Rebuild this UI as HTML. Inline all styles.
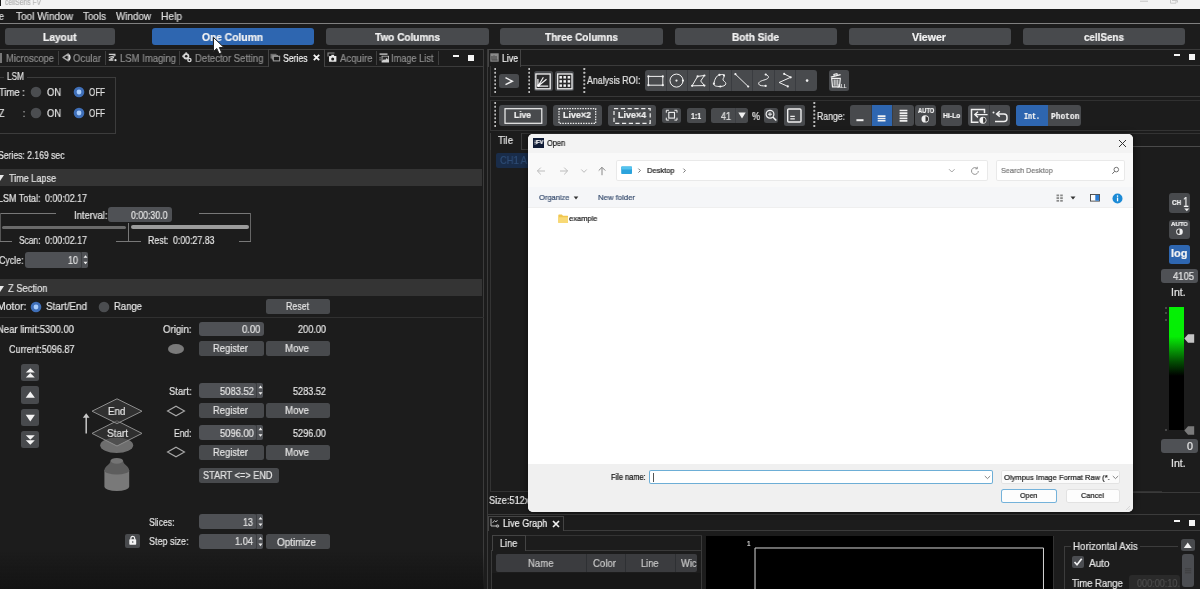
<!DOCTYPE html>
<html><head><meta charset="utf-8"><title>cellSens FV</title>
<style>
html,body{margin:0;padding:0;}
body{width:1200px;height:589px;overflow:hidden;position:relative;background:#1c1c1c;font-family:"Liberation Sans", sans-serif;}
#root{position:absolute;left:0;top:0;width:1200px;height:589px;overflow:hidden;filter:blur(0.5px);}
#root div,#root span,#root svg{position:absolute;display:block;}
#root span{white-space:pre;will-change:transform;-webkit-text-stroke:0.22px;}
</style></head><body><div id="root">
<div style="left:0px;top:0.0px;width:1200px;height:8.8px;background:#f3f3f3;"></div>
<div style="left:0px;top:0.0px;width:1.3px;height:6.0px;background:#1a1a1a;"></div>
<span style="top:-4.35px;font-size:8.5px;line-height:12.5px;color:#b4b4b4;left:4.8px;transform-origin:0 50%;transform:scaleX(0.794);">cellSens FV</span>
<svg style="left:1136px;top:0.0px" width="50" height="9" viewBox="0 0 50 9"><path d="M4 1.200h8" stroke="#c4c4c4" fill="none" stroke-width="1"/><path d="M34.500 0v3.200h5.500V0M36 0.500h5.500v2" stroke="#c4c4c4" fill="none" stroke-width="0.900"/></svg>
<div style="left:0px;top:8.8px;width:1200px;height:14.2px;background:#1a1a1a;"></div>
<span style="top:9.25px;font-size:10.5px;line-height:14.5px;color:#dcdcdc;left:-1.2px;transform-origin:0 50%;transform:scaleX(0.856);">e</span>
<span style="top:9.25px;font-size:10.5px;line-height:14.5px;color:#dcdcdc;left:15.8px;transform-origin:0 50%;transform:scaleX(0.957);">Tool Window</span>
<span style="top:9.25px;font-size:10.5px;line-height:14.5px;color:#dcdcdc;left:82.8px;transform-origin:0 50%;transform:scaleX(0.938);">Tools</span>
<span style="top:9.25px;font-size:10.5px;line-height:14.5px;color:#dcdcdc;left:115.8px;transform-origin:0 50%;transform:scaleX(0.937);">Window</span>
<span style="top:9.25px;font-size:10.5px;line-height:14.5px;color:#dcdcdc;left:160.8px;transform-origin:0 50%;transform:scaleX(0.972);">Help</span>
<div style="left:0px;top:23.0px;width:1200px;height:1.0px;background:#808080;"></div>
<div style="left:5px;top:28.0px;width:110px;height:16.5px;background:#484a4d;border-radius:3px;"></div>
<span style="top:29.55px;font-size:10.5px;line-height:14.5px;color:#f2f2f2;font-weight:700;left:43.3px;transform-origin:0 50%;transform:scaleX(0.973);">Layout</span>
<div style="left:152px;top:28.0px;width:162px;height:16.5px;background:#2e66b0;border-radius:3px;"></div>
<span style="top:29.55px;font-size:10.5px;line-height:14.5px;color:#f2f2f2;font-weight:700;left:201.8px;transform-origin:0 50%;transform:scaleX(0.977);">One Column</span>
<div style="left:326px;top:28.0px;width:162.5px;height:16.5px;background:#484a4d;border-radius:3px;"></div>
<span style="top:29.55px;font-size:10.5px;line-height:14.5px;color:#f2f2f2;font-weight:700;left:374.8px;transform-origin:0 50%;transform:scaleX(0.955);">Two Columns</span>
<div style="left:500px;top:28.0px;width:162.5px;height:16.5px;background:#484a4d;border-radius:3px;"></div>
<span style="top:29.55px;font-size:10.5px;line-height:14.5px;color:#f2f2f2;font-weight:700;left:544.8px;transform-origin:0 50%;transform:scaleX(0.955);">Three Columns</span>
<div style="left:675px;top:28.0px;width:161.5px;height:16.5px;background:#484a4d;border-radius:3px;"></div>
<span style="top:29.55px;font-size:10.5px;line-height:14.5px;color:#f2f2f2;font-weight:700;left:731.8px;transform-origin:0 50%;transform:scaleX(0.959);">Both Side</span>
<div style="left:849px;top:28.0px;width:162px;height:16.5px;background:#484a4d;border-radius:3px;"></div>
<span style="top:29.55px;font-size:10.5px;line-height:14.5px;color:#f2f2f2;font-weight:700;left:911.8px;transform-origin:0 50%;transform:scaleX(1.01);">Viewer</span>
<div style="left:1023px;top:28.0px;width:162px;height:16.5px;background:#484a4d;border-radius:3px;"></div>
<span style="top:29.55px;font-size:10.5px;line-height:14.5px;color:#f2f2f2;font-weight:700;left:1083.8px;transform-origin:0 50%;transform:scaleX(0.938);">cellSens</span>
<div style="left:0px;top:48.5px;width:484px;height:1.0px;background:#3b3b3b;"></div>
<div style="left:0px;top:66.0px;width:484px;height:1.0px;background:#3b3b3b;"></div>
<div style="left:483.2px;top:48.5px;width:1.3px;height:540.5px;background:#3b3b3b;"></div>
<div style="left:57.5px;top:51.0px;width:1.0px;height:14.0px;background:#3e3e3e;"></div>
<div style="left:104.5px;top:51.0px;width:1.0px;height:14.0px;background:#3e3e3e;"></div>
<div style="left:178.5px;top:51.0px;width:1.0px;height:14.0px;background:#3e3e3e;"></div>
<div style="left:376px;top:51.0px;width:1px;height:14.0px;background:#3e3e3e;"></div>
<div style="left:437.5px;top:51.0px;width:1.0px;height:14.0px;background:#3e3e3e;"></div>
<div style="left:267.5px;top:49.0px;width:57.0px;height:18.0px;background:#1c1c1c;border:1px solid #444;border-bottom:none;box-sizing:border-box;"></div>
<span style="top:50.75px;font-size:10.5px;line-height:14.5px;color:#8c8c8c;left:5.8px;transform-origin:0 50%;transform:scaleX(0.894);">Microscope</span>
<span style="top:50.75px;font-size:10.5px;line-height:14.5px;color:#8c8c8c;left:73.3px;transform-origin:0 50%;transform:scaleX(0.905);">Ocular</span>
<span style="top:50.75px;font-size:10.5px;line-height:14.5px;color:#8c8c8c;left:119.8px;transform-origin:0 50%;transform:scaleX(0.905);">LSM Imaging</span>
<span style="top:50.75px;font-size:10.5px;line-height:14.5px;color:#8c8c8c;left:194.8px;transform-origin:0 50%;transform:scaleX(0.91);">Detector Setting</span>
<span style="top:50.75px;font-size:10.5px;line-height:14.5px;color:#f0f0f0;left:282.8px;transform-origin:0 50%;transform:scaleX(0.823);">Series</span>
<span style="top:50.75px;font-size:10.5px;line-height:14.5px;color:#8c8c8c;left:339.8px;transform-origin:0 50%;transform:scaleX(0.913);">Acquire</span>
<span style="top:50.75px;font-size:10.5px;line-height:14.5px;color:#8c8c8c;left:391.3px;transform-origin:0 50%;transform:scaleX(0.877);">Image List</span>
<svg style="left:61.5px;top:53.0px" width="9.5" height="9" viewBox="0 0 9.5 9"><path d="M1 4.400L6.300 0.900V7.900z" fill="none" stroke="#a8a8a8" stroke-width="1.300" stroke-linejoin="round"/><path d="M6.900 1.600Q8.900 4.400 6.900 7.200" fill="none" stroke="#e0e0e0" stroke-width="1.500"/></svg>
<svg style="left:108px;top:52.8px" width="9.5" height="9" viewBox="0 0 9.5 9"><path d="M0.800 1.300h6.700M0.800 4.500l6.700-2M0.800 7h4.600M2.500 5.800l3.500-1.500" stroke="#cfcfcf" stroke-width="1.300" fill="none"/><circle cx="7.500" cy="7.200" r="1.100" fill="#e0e0e0"/></svg>
<svg style="left:182px;top:52.0px" width="10.5" height="10.5" viewBox="0 0 10.5 10.5"><circle cx="4.200" cy="4.300" r="3.100" fill="#d8d8d8"/><rect x="3.300" y="0.400" width="1.800" height="1.500" fill="#d8d8d8"/><rect x="0.300" y="3.400" width="1.500" height="1.800" fill="#d8d8d8"/><circle cx="4.200" cy="4.300" r="1.300" fill="#1c1c1c"/><circle cx="7.400" cy="8" r="2.300" fill="#d8d8d8"/><circle cx="7.400" cy="8" r="0.900" fill="#1c1c1c"/></svg>
<svg style="left:270px;top:52.5px" width="10.5" height="9" viewBox="0 0 10.5 9"><rect x="0.500" y="0.800" width="6" height="4.700" fill="#6e6e6e"/><rect x="1.800" y="2" width="6.200" height="4.600" fill="#848484"/><rect x="3.300" y="3.300" width="6.300" height="4.600" fill="#1c1c1c" stroke="#9c9c9c" stroke-width="1.100"/></svg>
<svg style="left:327px;top:52.0px" width="10.5" height="10.5" viewBox="0 0 10.5 10.5"><path d="M1 4.500V1h6.500" fill="none" stroke="#8e8e8e" stroke-width="1.100"/><rect x="2" y="4" width="7.400" height="5.800" rx="0.600" fill="#e6e6e6"/><rect x="4.300" y="2.800" width="2.800" height="1.500" fill="#e6e6e6"/><circle cx="5.700" cy="6.900" r="1.500" fill="#1c1c1c"/></svg>
<svg style="left:378.5px;top:52.5px" width="10.5" height="10" viewBox="0 0 10.5 10"><path d="M0.500 1.100h8" stroke="#e0e0e0" stroke-width="1.200"/><rect x="2.600" y="2.800" width="7.400" height="6.700" fill="#d0d0d0"/><path d="M3.400 3.600h5.800v3.200l-1.500-1.700-1.600 2-1.100-0.900-1.600 1.500z" fill="#2a2a2a"/><rect x="0.500" y="4.300" width="1.100" height="1.100" fill="#bbb"/><rect x="0.500" y="6.300" width="1.100" height="1.100" fill="#bbb"/></svg>
<div style="left:0px;top:53.0px;width:1.5px;height:10.0px;background:#777;"></div>
<svg style="left:312.5px;top:53.6px" width="7" height="7" viewBox="0 0 7 7"><path d="M0.800 0.800l5.400 5.400M6.200 0.800l-5.400 5.400" stroke="#f4f4f4" stroke-width="1.800"/></svg>
<div style="left:452.5px;top:54.8px;width:6.5px;height:2.0px;background:#f4f4f4;"></div>
<div style="left:468.3px;top:54.6px;width:6.0px;height:6.0px;background:#f4f4f4;"></div>
<div style="left:0px;top:77.0px;width:4px;height:1.0px;background:#3c3c3c;"></div>
<div style="left:27px;top:77.0px;width:88.5px;height:1.0px;background:#3c3c3c;"></div>
<div style="left:115px;top:77.0px;width:1px;height:56.0px;background:#3c3c3c;"></div>
<div style="left:0px;top:132.5px;width:115.5px;height:1.0px;background:#3c3c3c;"></div>
<span style="top:69.15px;font-size:10.5px;line-height:14.5px;color:#e4e4e4;left:6.8px;transform-origin:0 50%;transform:scaleX(0.787);">LSM</span>
<span style="top:84.95px;font-size:10.5px;line-height:14.5px;color:#e4e4e4;left:-0.7px;transform-origin:0 50%;transform:scaleX(0.903);">Time :</span>
<span style="top:105.95px;font-size:10.5px;line-height:14.5px;color:#e4e4e4;left:-0.7px;transform-origin:0 50%;transform:scaleX(0.856);">Z</span>
<span style="top:105.95px;font-size:10.5px;line-height:14.5px;color:#e4e4e4;left:23.3px;transform-origin:0 50%;transform:scaleX(0.7);">:</span>
<svg style="left:30.299999999999997px;top:86.3px" width="12" height="12" viewBox="0 0 12 12"><circle cx="6" cy="6" r="5.3" fill="#4b4d50"/></svg>
<svg style="left:73px;top:86.3px" width="12" height="12" viewBox="0 0 12 12"><circle cx="6" cy="6" r="5.3" fill="#3f6fb8"/><circle cx="6" cy="6" r="2.4" fill="#a9cdfb"/></svg>
<span style="top:85.25px;font-size:10.5px;line-height:14.5px;color:#e4e4e4;left:46.8px;transform-origin:0 50%;transform:scaleX(0.889);">ON</span>
<span style="top:85.25px;font-size:10.5px;line-height:14.5px;color:#e4e4e4;left:89.3px;transform-origin:0 50%;transform:scaleX(0.762);">OFF</span>
<svg style="left:30.299999999999997px;top:107.3px" width="12" height="12" viewBox="0 0 12 12"><circle cx="6" cy="6" r="5.3" fill="#4b4d50"/></svg>
<svg style="left:73px;top:107.3px" width="12" height="12" viewBox="0 0 12 12"><circle cx="6" cy="6" r="5.3" fill="#3f6fb8"/><circle cx="6" cy="6" r="2.4" fill="#a9cdfb"/></svg>
<span style="top:106.25px;font-size:10.5px;line-height:14.5px;color:#e4e4e4;left:46.8px;transform-origin:0 50%;transform:scaleX(0.889);">ON</span>
<span style="top:106.25px;font-size:10.5px;line-height:14.5px;color:#e4e4e4;left:89.3px;transform-origin:0 50%;transform:scaleX(0.762);">OFF</span>
<span style="top:147.55px;font-size:10.5px;line-height:14.5px;color:#e4e4e4;left:-1.7px;transform-origin:0 50%;transform:scaleX(0.82);">Series: 2.169 sec</span>
<div style="left:0px;top:169.2px;width:481.8px;height:17.3px;background:#343434;"></div>
<svg style="left:-4px;top:174.0px" width="8" height="8" viewBox="0 0 8 8"><path d="M0 1h8l-4 6z" fill="#e8e8e8"/></svg>
<span style="top:170.95px;font-size:10.5px;line-height:14.5px;color:#e4e4e4;left:8.8px;transform-origin:0 50%;transform:scaleX(0.863);">Time Lapse</span>
<span style="top:191.35px;font-size:10.5px;line-height:14.5px;color:#e4e4e4;left:-2.2px;transform-origin:0 50%;transform:scaleX(0.86);">LSM Total:</span>
<span style="top:191.35px;font-size:10.5px;line-height:14.5px;color:#e4e4e4;left:44.8px;transform-origin:0 50%;transform:scaleX(0.846);">0:00:02.17</span>
<div style="left:0px;top:213.0px;width:56px;height:1.0px;background:#787878;"></div>
<div style="left:0px;top:213.0px;width:1px;height:29.0px;background:#555;"></div>
<div style="left:199px;top:213.0px;width:52px;height:1.0px;background:#787878;"></div>
<div style="left:250px;top:213.0px;width:1px;height:29.0px;background:#666;"></div>
<span style="top:207.65px;font-size:10.5px;line-height:14.5px;color:#e4e4e4;left:73.8px;transform-origin:0 50%;transform:scaleX(0.897);">Interval:</span>
<div style="left:108px;top:207.0px;width:63.5px;height:14.5px;background:#4f5155;border-radius:3px;"></div>
<span style="top:207.65px;font-size:10.5px;line-height:14.5px;color:#e4e4e4;left:131.3px;transform-origin:0 50%;transform:scaleX(0.833);">0:00:30.0</span>
<div style="left:2px;top:225.5px;width:123.5px;height:3.0px;background:#6a6a6a;border-radius:1.5px;"></div>
<div style="left:131px;top:225.0px;width:118px;height:4.0px;background:#9c9c9c;border-radius:2px;"></div>
<div style="left:128px;top:223.0px;width:1px;height:19.0px;background:#787878;"></div>
<div style="left:0px;top:241.0px;width:12px;height:1.0px;background:#787878;"></div>
<div style="left:116px;top:241.0px;width:25px;height:1.0px;background:#787878;"></div>
<div style="left:238.5px;top:241.0px;width:12.5px;height:1.0px;background:#787878;"></div>
<span style="top:233.25px;font-size:10.5px;line-height:14.5px;color:#e4e4e4;left:18.8px;transform-origin:0 50%;transform:scaleX(0.8);">Scan:</span>
<span style="top:233.25px;font-size:10.5px;line-height:14.5px;color:#e4e4e4;left:45.3px;transform-origin:0 50%;transform:scaleX(0.846);">0:00:02.17</span>
<span style="top:233.25px;font-size:10.5px;line-height:14.5px;color:#e4e4e4;left:147.8px;transform-origin:0 50%;transform:scaleX(0.836);">Rest:</span>
<span style="top:233.25px;font-size:10.5px;line-height:14.5px;color:#e4e4e4;left:172.8px;transform-origin:0 50%;transform:scaleX(0.836);">0:00:27.83</span>
<span style="top:253.25px;font-size:10.5px;line-height:14.5px;color:#e4e4e4;left:-0.7px;transform-origin:0 50%;transform:scaleX(0.839);">Cycle:</span>
<div style="left:25px;top:252.0px;width:56.5px;height:15.5px;background:#4f5155;border-radius:3px;"></div>
<span style="top:253.25px;font-size:10.5px;line-height:14.5px;color:#e4e4e4;left:67.8px;transform-origin:0 50%;transform:scaleX(0.856);">10</span>
<div style="left:80.0px;top:252.0px;width:7.8px;height:15.5px;background:#4f5155;border-radius:2px;"></div>
<div style="left:81.2px;top:252.0px;width:0.7px;height:15.5px;background:#3c3e41;"></div>
<svg style="left:81.5px;top:252.0px" width="7" height="15.5" viewBox="0 0 7 15.5"><path d="M1.5 5.75l2-2.6 2 2.6zM1.5 9.75l2 2.6 2-2.6z" fill="#f0f0f0"/></svg>
<div style="left:0px;top:278.6px;width:481.8px;height:17.9px;background:#343434;"></div>
<svg style="left:-4px;top:284.5px" width="8" height="8" viewBox="0 0 8 8"><path d="M0 1h8l-4 6z" fill="#e8e8e8"/></svg>
<span style="top:281.25px;font-size:10.5px;line-height:14.5px;color:#e4e4e4;left:8.3px;transform-origin:0 50%;transform:scaleX(0.89);">Z Section</span>
<span style="top:299.25px;font-size:10.5px;line-height:14.5px;color:#e4e4e4;left:-2.7px;transform-origin:0 50%;transform:scaleX(0.991);">Motor:</span>
<svg style="left:30px;top:300.5px" width="12" height="12" viewBox="0 0 12 12"><circle cx="6" cy="6" r="5.3" fill="#3f6fb8"/><circle cx="6" cy="6" r="2.4" fill="#a9cdfb"/></svg>
<span style="top:299.25px;font-size:10.5px;line-height:14.5px;color:#e4e4e4;left:45.8px;transform-origin:0 50%;transform:scaleX(0.936);">Start/End</span>
<svg style="left:98px;top:300.5px" width="12" height="12" viewBox="0 0 12 12"><circle cx="6" cy="6" r="5.3" fill="#4b4d50"/></svg>
<span style="top:299.25px;font-size:10.5px;line-height:14.5px;color:#e4e4e4;left:113.8px;transform-origin:0 50%;transform:scaleX(0.905);">Range</span>
<div style="left:265.5px;top:298.5px;width:64.5px;height:15.0px;background:#484a4d;border-radius:2.5px;"></div>
<span style="top:298.65px;font-size:10.5px;line-height:14.5px;color:#e4e4e4;left:285.8px;transform-origin:0 50%;transform:scaleX(0.838);">Reset</span>
<div style="left:0px;top:316.5px;width:484px;height:1.0px;background:#303030;"></div>
<span style="top:322.45px;font-size:10.5px;line-height:14.5px;color:#e4e4e4;left:-2.7px;transform-origin:0 50%;transform:scaleX(0.904);">Near limit:5300.00</span>
<span style="top:322.45px;font-size:10.5px;line-height:14.5px;color:#e4e4e4;left:162.8px;transform-origin:0 50%;transform:scaleX(0.921);">Origin:</span>
<div style="left:199px;top:322.2px;width:64.5px;height:14.2px;background:#4f5155;border-radius:3px;"></div>
<span style="top:322.45px;font-size:10.5px;line-height:14.5px;color:#e4e4e4;left:241.8px;transform-origin:0 50%;transform:scaleX(0.905);">0.00</span>
<span style="top:322.45px;font-size:10.5px;line-height:14.5px;color:#e4e4e4;left:297.8px;transform-origin:0 50%;transform:scaleX(0.872);">200.00</span>
<span style="top:342.05px;font-size:10.5px;line-height:14.5px;color:#e4e4e4;left:8.8px;transform-origin:0 50%;transform:scaleX(0.863);">Current:5096.87</span>
<svg style="left:166px;top:342px" width="20" height="14" viewBox="0 0 20 14"><ellipse cx="10" cy="7" rx="8" ry="5" fill="#7a7a7a"/></svg>
<div style="left:199px;top:341.2px;width:64.5px;height:14.8px;background:#484a4d;border-radius:2.5px;"></div>
<span style="top:341.25px;font-size:10.5px;line-height:14.5px;color:#e4e4e4;left:213.3px;transform-origin:0 50%;transform:scaleX(0.895);">Register</span>
<div style="left:266px;top:341.2px;width:64px;height:14.8px;background:#484a4d;border-radius:2.5px;"></div>
<span style="top:341.25px;font-size:10.5px;line-height:14.5px;color:#e4e4e4;left:285.3px;transform-origin:0 50%;transform:scaleX(0.934);">Move</span>
<div style="left:20.6px;top:363.8px;width:18.6px;height:17.4px;background:#484a4d;border-radius:2.5px;"></div>
<svg style="left:20.6px;top:363.8px" width="18.6" height="17.4" viewBox="0 0 18.6 17.4"><path d="M9.3 4.2l4.5 4.4h-9zM9.3 9l4.5 4.6h-9z" fill="#f4f4f4"/></svg>
<div style="left:20.6px;top:386.3px;width:18.6px;height:17.4px;background:#484a4d;border-radius:2.5px;"></div>
<svg style="left:20.6px;top:386.3px" width="18.6" height="17.4" viewBox="0 0 18.6 17.4"><path d="M9.3 5.6l4.6 6.2H4.7z" fill="#f4f4f4"/></svg>
<div style="left:20.6px;top:408.6px;width:18.6px;height:17.4px;background:#484a4d;border-radius:2.5px;"></div>
<svg style="left:20.6px;top:408.6px" width="18.6" height="17.4" viewBox="0 0 18.6 17.4"><path d="M9.3 12.4l4.6-6.6H4.7z" fill="#f4f4f4"/></svg>
<div style="left:20.6px;top:431px;width:18.6px;height:17.4px;background:#484a4d;border-radius:2.5px;"></div>
<svg style="left:20.6px;top:431px" width="18.6" height="17.4" viewBox="0 0 18.6 17.4"><path d="M9.3 13.8l4.5-4.6h-9zM9.3 8.8l4.5-4.6h-9z" fill="#f4f4f4"/></svg>
<span style="top:384.05px;font-size:10.5px;line-height:14.5px;color:#e4e4e4;left:168.8px;transform-origin:0 50%;transform:scaleX(0.897);">Start:</span>
<div style="left:199px;top:383.2px;width:57.5px;height:14.4px;background:#4f5155;border-radius:3px;"></div>
<span style="top:384.05px;font-size:10.5px;line-height:14.5px;color:#e4e4e4;left:219.8px;transform-origin:0 50%;transform:scaleX(0.895);">5083.52</span>
<div style="left:255.0px;top:383.2px;width:7.8px;height:14.4px;background:#4f5155;border-radius:2px;"></div>
<div style="left:256.2px;top:383.2px;width:0.7px;height:14.4px;background:#3c3e41;"></div>
<svg style="left:256.5px;top:383.2px" width="7" height="14.4" viewBox="0 0 7 14.4"><path d="M1.5 5.199999999999989l2-2.6 2 2.6zM1.5 9.199999999999989l2 2.6 2-2.6z" fill="#f0f0f0"/></svg>
<span style="top:384.05px;font-size:10.5px;line-height:14.5px;color:#e4e4e4;left:292.8px;transform-origin:0 50%;transform:scaleX(0.869);">5283.52</span>
<svg style="left:166px;top:403.5px" width="20" height="14" viewBox="0 0 20 14"><path d="M1.5 7L10 2.2 18.5 7 10 11.8z" fill="none" stroke="#a8a8a8" stroke-width="1.1"/></svg>
<div style="left:199px;top:402.8px;width:64.5px;height:14.8px;background:#484a4d;border-radius:2.5px;"></div>
<span style="top:402.85px;font-size:10.5px;line-height:14.5px;color:#e4e4e4;left:213.3px;transform-origin:0 50%;transform:scaleX(0.895);">Register</span>
<div style="left:266px;top:402.8px;width:64px;height:14.8px;background:#484a4d;border-radius:2.5px;"></div>
<span style="top:402.85px;font-size:10.5px;line-height:14.5px;color:#e4e4e4;left:285.3px;transform-origin:0 50%;transform:scaleX(0.934);">Move</span>
<span style="top:426.05px;font-size:10.5px;line-height:14.5px;color:#e4e4e4;left:173.8px;transform-origin:0 50%;transform:scaleX(0.81);">End:</span>
<div style="left:199px;top:425.2px;width:57.5px;height:14.4px;background:#4f5155;border-radius:3px;"></div>
<span style="top:426.05px;font-size:10.5px;line-height:14.5px;color:#e4e4e4;left:219.8px;transform-origin:0 50%;transform:scaleX(0.895);">5096.00</span>
<div style="left:255.0px;top:425.2px;width:7.8px;height:14.4px;background:#4f5155;border-radius:2px;"></div>
<div style="left:256.2px;top:425.2px;width:0.7px;height:14.4px;background:#3c3e41;"></div>
<svg style="left:256.5px;top:425.2px" width="7" height="14.4" viewBox="0 0 7 14.4"><path d="M1.5 5.199999999999989l2-2.6 2 2.6zM1.5 9.199999999999989l2 2.6 2-2.6z" fill="#f0f0f0"/></svg>
<span style="top:426.05px;font-size:10.5px;line-height:14.5px;color:#e4e4e4;left:292.8px;transform-origin:0 50%;transform:scaleX(0.869);">5296.00</span>
<svg style="left:166px;top:445px" width="20" height="14" viewBox="0 0 20 14"><path d="M1.5 7L10 2.2 18.5 7 10 11.8z" fill="none" stroke="#a8a8a8" stroke-width="1.1"/></svg>
<div style="left:199px;top:444.8px;width:64.5px;height:14.8px;background:#484a4d;border-radius:2.5px;"></div>
<span style="top:444.85px;font-size:10.5px;line-height:14.5px;color:#e4e4e4;left:213.3px;transform-origin:0 50%;transform:scaleX(0.895);">Register</span>
<div style="left:266px;top:444.8px;width:64px;height:14.8px;background:#484a4d;border-radius:2.5px;"></div>
<span style="top:444.85px;font-size:10.5px;line-height:14.5px;color:#e4e4e4;left:285.3px;transform-origin:0 50%;transform:scaleX(0.934);">Move</span>
<div style="left:199px;top:467.7px;width:79.5px;height:15.3px;background:#484a4d;border-radius:2.5px;"></div>
<span style="top:468.0px;font-size:10.5px;line-height:14.5px;color:#e4e4e4;left:203.3px;transform-origin:0 50%;transform:scaleX(0.872);">START &lt;=&gt; END</span>
<svg style="left:80px;top:395px" width="70" height="102" viewBox="0 0 70 102">
<ellipse cx="36.7" cy="50.3" rx="16.5" ry="7.8" fill="#6e6e6e"/>
<path d="M24.4 75v16.600a12.400 4.300 0 0 0 24.800 0v-16.600z" fill="#797979"/>
<path d="M30.500 66C30.200 70 24.400 71 24.400 75.500a12.400 4 0 0 0 24.800 0C49.200 71 43.400 70 43.100 66z" fill="#5d5d5d"/>
<ellipse cx="36.800" cy="65.800" rx="6.300" ry="2.900" fill="#747474"/>
<path d="M12 38.400L37 25.800 62 38.400 37 51z" fill="rgba(58,58,58,0.6)" stroke="#8e8e8e" stroke-width="1"/>
<path d="M12 16.200L37 3.800 62 16.200 37 28.600z" fill="rgba(62,62,62,0.6)" stroke="#8e8e8e" stroke-width="1"/>
<path d="M6.200 38.500V21" fill="none" stroke="#c8c8c8" stroke-width="1.500"/><path d="M2.800 22.800l3.400-4.600 3.400 4.600z" fill="#c8c8c8"/>
</svg>
<span style="top:403.75px;font-size:10.5px;line-height:14.5px;color:#e4e4e4;left:108.3px;transform-origin:0 50%;transform:scaleX(0.936);">End</span>
<span style="top:426.05px;font-size:10.5px;line-height:14.5px;color:#e4e4e4;left:106.8px;transform-origin:0 50%;transform:scaleX(0.946);">Start</span>
<span style="top:514.95px;font-size:10.5px;line-height:14.5px;color:#e4e4e4;left:148.8px;transform-origin:0 50%;transform:scaleX(0.824);">Slices:</span>
<div style="left:199px;top:513.8px;width:57.5px;height:15.0px;background:#4f5155;border-radius:3px;"></div>
<span style="top:514.95px;font-size:10.5px;line-height:14.5px;color:#e4e4e4;left:242.8px;transform-origin:0 50%;transform:scaleX(0.856);">13</span>
<div style="left:255.0px;top:513.8px;width:7.8px;height:15.0px;background:#4f5155;border-radius:2px;"></div>
<div style="left:256.2px;top:513.8px;width:0.7px;height:15.0px;background:#3c3e41;"></div>
<svg style="left:256.5px;top:513.8px" width="7" height="15.0" viewBox="0 0 7 15.0"><path d="M1.5 5.5l2-2.6 2 2.6zM1.5 9.5l2 2.6 2-2.6z" fill="#f0f0f0"/></svg>
<span style="top:534.45px;font-size:10.5px;line-height:14.5px;color:#e4e4e4;left:148.8px;transform-origin:0 50%;transform:scaleX(0.857);">Step size:</span>
<div style="left:199px;top:533.5px;width:57.5px;height:15.1px;background:#4f5155;border-radius:3px;"></div>
<span style="top:534.45px;font-size:10.5px;line-height:14.5px;color:#e4e4e4;left:234.8px;transform-origin:0 50%;transform:scaleX(0.881);">1.04</span>
<div style="left:255.0px;top:533.5px;width:7.8px;height:15.1px;background:#4f5155;border-radius:2px;"></div>
<div style="left:256.2px;top:533.5px;width:0.7px;height:15.1px;background:#3c3e41;"></div>
<svg style="left:256.5px;top:533.5px" width="7" height="15.1" viewBox="0 0 7 15.1"><path d="M1.5 5.5499999999999545l2-2.6 2 2.6zM1.5 9.549999999999955l2 2.6 2-2.6z" fill="#f0f0f0"/></svg>
<div style="left:266px;top:533.5px;width:64px;height:15.1px;background:#484a4d;border-radius:2.5px;"></div>
<span style="top:534.7px;font-size:10.5px;line-height:14.5px;color:#e4e4e4;left:277.3px;transform-origin:0 50%;transform:scaleX(0.941);">Optimize</span>
<div style="left:124.8px;top:534.4px;width:15.2px;height:13.4px;background:#484a4d;border-radius:2px;"></div>
<svg style="left:124.8px;top:534.4px" width="15.2" height="13.4" viewBox="0 0 15.2 13.4"><rect x="4.300" y="5.300" width="6.900" height="5.400" rx="0.7" fill="#f4f4f4"/><path d="M5.900 5.500V4.300a1.900 1.900 0 0 1 3.800 0V5.500" fill="none" stroke="#f4f4f4" stroke-width="1.200"/><circle cx="7.750" cy="8" r="0.800" fill="#4a4c50"/></svg>
<div style="left:0px;top:552px;width:484px;height:37px;background:transparent;background:linear-gradient(to bottom,rgba(19,19,19,0),rgba(19,19,19,0.95));"></div>
<div style="left:486.8px;top:48.5px;width:713.2px;height:1.0px;background:#3b3b3b;"></div>
<div style="left:486.8px;top:48.5px;width:1.0px;height:465.5px;background:#3b3b3b;"></div>
<div style="left:487.5px;top:65px;width:712.5px;height:1px;background:#3b3b3b;"></div>
<div style="left:488px;top:49px;width:32.5px;height:17.5px;background:#1c1c1c;border:1px solid #444;border-bottom:none;box-sizing:border-box;"></div>
<svg style="left:490px;top:53px" width="9" height="9" viewBox="0 0 9 9"><rect x="0.3" y="0.3" width="8.4" height="8.4" fill="#8a8a8a"/><path d="M2 6.500V3M4 6.500V2.500M6 6.500V3M1.500 7h6" stroke="#333" stroke-width="0.9"/></svg>
<span style="top:50.75px;font-size:10.5px;line-height:14.5px;color:#f0f0f0;left:501.8px;transform-origin:0 50%;transform:scaleX(0.83);">Live</span>
<div style="left:1174px;top:54px;width:6.3px;height:2px;background:#f4f4f4;"></div>
<div style="left:1188.7px;top:54.2px;width:6.3px;height:6.1px;background:#f4f4f4;"></div>
<div style="left:489.5px;top:96px;width:710.5px;height:1px;background:#383838;"></div>
<div style="left:489.5px;top:100px;width:710.5px;height:1px;background:#303030;"></div>
<div style="left:489.5px;top:66px;width:1.0px;height:30px;background:#333;"></div>
<div style="left:489.5px;top:100px;width:1.0px;height:30px;background:#333;"></div>
<div style="left:489.5px;top:130px;width:710.5px;height:1px;background:#333;"></div>
<div style="left:489.5px;top:132.5px;width:710.5px;height:1.0px;background:#333;"></div>
<svg style="left:493.8px;top:68.0px" width="2.6" height="25.9" viewBox="0 0 2.6 25.9"><rect x="0.300" y="0.0" width="2" height="2" rx="0.4" fill="#bdbdbd"/><rect x="0.300" y="3.82" width="2" height="2" rx="0.4" fill="#bdbdbd"/><rect x="0.300" y="7.64" width="2" height="2" rx="0.4" fill="#bdbdbd"/><rect x="0.300" y="11.46" width="2" height="2" rx="0.4" fill="#bdbdbd"/><rect x="0.300" y="15.28" width="2" height="2" rx="0.4" fill="#bdbdbd"/><rect x="0.300" y="19.1" width="2" height="2" rx="0.4" fill="#bdbdbd"/><rect x="0.300" y="22.92" width="2" height="2" rx="0.4" fill="#bdbdbd"/></svg>
<svg style="left:527.8px;top:68.0px" width="2.6" height="25.9" viewBox="0 0 2.6 25.9"><rect x="0.300" y="0.0" width="2" height="2" rx="0.4" fill="#bdbdbd"/><rect x="0.300" y="3.82" width="2" height="2" rx="0.4" fill="#bdbdbd"/><rect x="0.300" y="7.64" width="2" height="2" rx="0.4" fill="#bdbdbd"/><rect x="0.300" y="11.46" width="2" height="2" rx="0.4" fill="#bdbdbd"/><rect x="0.300" y="15.28" width="2" height="2" rx="0.4" fill="#bdbdbd"/><rect x="0.300" y="19.1" width="2" height="2" rx="0.4" fill="#bdbdbd"/><rect x="0.300" y="22.92" width="2" height="2" rx="0.4" fill="#bdbdbd"/></svg>
<svg style="left:583.3px;top:68.0px" width="2.6" height="25.9" viewBox="0 0 2.6 25.9"><rect x="0.300" y="0.0" width="2" height="2" rx="0.4" fill="#bdbdbd"/><rect x="0.300" y="3.82" width="2" height="2" rx="0.4" fill="#bdbdbd"/><rect x="0.300" y="7.64" width="2" height="2" rx="0.4" fill="#bdbdbd"/><rect x="0.300" y="11.46" width="2" height="2" rx="0.4" fill="#bdbdbd"/><rect x="0.300" y="15.28" width="2" height="2" rx="0.4" fill="#bdbdbd"/><rect x="0.300" y="19.1" width="2" height="2" rx="0.4" fill="#bdbdbd"/><rect x="0.300" y="22.92" width="2" height="2" rx="0.4" fill="#bdbdbd"/></svg>
<svg style="left:493.8px;top:102.1px" width="2.6" height="25.9" viewBox="0 0 2.6 25.9"><rect x="0.300" y="0.0" width="2" height="2" rx="0.4" fill="#bdbdbd"/><rect x="0.300" y="3.82" width="2" height="2" rx="0.4" fill="#bdbdbd"/><rect x="0.300" y="7.64" width="2" height="2" rx="0.4" fill="#bdbdbd"/><rect x="0.300" y="11.46" width="2" height="2" rx="0.4" fill="#bdbdbd"/><rect x="0.300" y="15.28" width="2" height="2" rx="0.4" fill="#bdbdbd"/><rect x="0.300" y="19.1" width="2" height="2" rx="0.4" fill="#bdbdbd"/><rect x="0.300" y="22.92" width="2" height="2" rx="0.4" fill="#bdbdbd"/></svg>
<svg style="left:813.0999999999999px;top:102.1px" width="2.6" height="25.9" viewBox="0 0 2.6 25.9"><rect x="0.300" y="0.0" width="2" height="2" rx="0.4" fill="#bdbdbd"/><rect x="0.300" y="3.82" width="2" height="2" rx="0.4" fill="#bdbdbd"/><rect x="0.300" y="7.64" width="2" height="2" rx="0.4" fill="#bdbdbd"/><rect x="0.300" y="11.46" width="2" height="2" rx="0.4" fill="#bdbdbd"/><rect x="0.300" y="15.28" width="2" height="2" rx="0.4" fill="#bdbdbd"/><rect x="0.300" y="19.1" width="2" height="2" rx="0.4" fill="#bdbdbd"/><rect x="0.300" y="22.92" width="2" height="2" rx="0.4" fill="#bdbdbd"/></svg>
<div style="left:498.7px;top:73.7px;width:20.0px;height:14.5px;background:#484a4d;border-radius:2.5px;"></div>
<svg style="left:498.7px;top:73.7px" width="20" height="14.5" viewBox="0 0 20 14.5"><path d="M6.500 3.700l6.800 3.500-6.800 3.500" fill="none" stroke="#f0f0f0" stroke-width="1.500"/></svg>
<div style="left:533.5px;top:70.7px;width:19.3px;height:20.3px;background:#484a4d;border-radius:2.5px;"></div>
<svg style="left:533.7px;top:70.5px" width="19" height="20.5" viewBox="0 0 19 20.5"><rect x="1.900" y="3" width="14.300" height="14.800" fill="#2b2b2c" stroke="#f2f2f2" stroke-width="1.300"/><path d="M3.900 15.200L9.400 6.200M3.900 15.200L12.500 8.300M3.900 15.200h10.300M3.900 15.200V8" stroke="#f2f2f2" stroke-width="1.200" fill="none"/><circle cx="4.300" cy="14.800" r="1.300" fill="#fff"/></svg>
<div style="left:555px;top:70.7px;width:19px;height:20.3px;background:#484a4d;border-radius:2.5px;"></div>
<svg style="left:554.7px;top:70.5px" width="19.8" height="20.5" viewBox="0 0 19.8 20.5"><rect x="2.700" y="3" width="14.300" height="14.800" fill="#2b2b2c" stroke="#f2f2f2" stroke-width="1.300"/><rect x="4.45" y="5.05" width="2.500" height="2.500" fill="#f4f4f4"/><rect x="4.45" y="9.15" width="2.500" height="2.500" fill="#f4f4f4"/><rect x="4.45" y="13.35" width="2.500" height="2.500" fill="#f4f4f4"/><rect x="8.45" y="5.05" width="2.500" height="2.500" fill="#f4f4f4"/><rect x="8.45" y="9.15" width="2.500" height="2.500" fill="#f4f4f4"/><rect x="8.45" y="13.35" width="2.500" height="2.500" fill="#f4f4f4"/><rect x="12.65" y="5.05" width="2.500" height="2.500" fill="#f4f4f4"/><rect x="12.65" y="9.15" width="2.500" height="2.500" fill="#f4f4f4"/><rect x="12.65" y="13.35" width="2.500" height="2.500" fill="#f4f4f4"/></svg>
<span style="top:73.45px;font-size:10.5px;line-height:14.5px;color:#e4e4e4;left:587.3px;transform-origin:0 50%;transform:scaleX(0.841);">Analysis ROI:</span>
<div style="left:644.6px;top:70.3px;width:172.9px;height:20.7px;background:#484a4d;border-radius:3px;"></div>
<div style="left:665.71px;top:70.3px;width:1.0px;height:20.7px;background:#3a3c40;"></div>
<div style="left:687.32px;top:70.3px;width:1.0px;height:20.7px;background:#3a3c40;"></div>
<div style="left:708.93px;top:70.3px;width:1.0px;height:20.7px;background:#3a3c40;"></div>
<div style="left:730.54px;top:70.3px;width:1.0px;height:20.7px;background:#3a3c40;"></div>
<div style="left:752.15px;top:70.3px;width:1.0px;height:20.7px;background:#3a3c40;"></div>
<div style="left:773.76px;top:70.3px;width:1.0px;height:20.7px;background:#3a3c40;"></div>
<div style="left:795.37px;top:70.3px;width:1.0px;height:20.7px;background:#3a3c40;"></div>
<svg style="left:644.6px;top:70.3px" width="21.6" height="20.7" viewBox="0 0 21.6 20.7"><rect x="3.4" y="6.400" width="14.4" height="8.800" fill="none" stroke="#f0f0f0" stroke-width="1"/><circle cx="3.4" cy="6.4" r="1.1" fill="#f0f0f0"/><circle cx="17.8" cy="6.4" r="1.1" fill="#f0f0f0"/><circle cx="3.4" cy="15.2" r="1.1" fill="#f0f0f0"/><circle cx="17.8" cy="15.2" r="1.1" fill="#f0f0f0"/></svg>
<svg style="left:666.21px;top:70.3px" width="21.6" height="20.7" viewBox="0 0 21.6 20.7"><circle cx="10.500" cy="10.600" r="6.500" fill="none" stroke="#f0f0f0" stroke-width="1"/><circle cx="10.5" cy="10.6" r="1.1" fill="#f0f0f0"/><circle cx="17" cy="10.6" r="1.1" fill="#f0f0f0"/></svg>
<svg style="left:687.82px;top:70.3px" width="21.6" height="20.7" viewBox="0 0 21.6 20.7"><path d="M4.100 15.800L9.600 6.400 16.400 5.500 12.700 11 16.400 15.600z" fill="none" stroke="#f0f0f0" stroke-width="1"/><circle cx="4.1" cy="15.8" r="1.1" fill="#f0f0f0"/><circle cx="9.6" cy="6.4" r="1.1" fill="#f0f0f0"/><circle cx="16.4" cy="5.5" r="1.1" fill="#f0f0f0"/><circle cx="16.4" cy="15.6" r="1.1" fill="#f0f0f0"/></svg>
<svg style="left:709.43px;top:70.3px" width="21.6" height="20.7" viewBox="0 0 21.6 20.7"><path d="M4.900 13.700C5.500 9.500 7.500 5.500 10.400 4.900c2.500-0.500 5-1 4.800 1.200-0.200 1.800-1.600 2.600-1.100 3.900 0.500 1.500 2.800 1.700 2.700 3.700-0.100 2-3.200 2.800-5.500 2.800-3.500 0-6.700-0.300-6.400-2.800z" fill="none" stroke="#f0f0f0" stroke-width="1"/><circle cx="10.4" cy="4.9" r="1.1" fill="#f0f0f0"/><circle cx="15" cy="5.4" r="1.1" fill="#f0f0f0"/><circle cx="4.9" cy="13.7" r="1.1" fill="#f0f0f0"/><circle cx="11.3" cy="16.5" r="1.1" fill="#f0f0f0"/></svg>
<svg style="left:731.04px;top:70.3px" width="21.6" height="20.7" viewBox="0 0 21.6 20.7"><path d="M4.400 4.200L17.200 16.500" fill="none" stroke="#f0f0f0" stroke-width="1"/><circle cx="4.4" cy="4.2" r="1.1" fill="#f0f0f0"/><circle cx="17.2" cy="16.5" r="1.1" fill="#f0f0f0"/></svg>
<svg style="left:752.65px;top:70.3px" width="21.6" height="20.7" viewBox="0 0 21.6 20.7"><path d="M12.700 4.500c4 1.500 3.500 4-0.500 5.200-3.500 1-7 2-6.500 4.300 0.400 1.800 4 2 7 1.900" fill="none" stroke="#f0f0f0" stroke-width="1"/><circle cx="12.7" cy="4.5" r="1.1" fill="#f0f0f0"/><circle cx="12.7" cy="15.9" r="1.1" fill="#f0f0f0"/></svg>
<svg style="left:774.26px;top:70.3px" width="21.6" height="20.7" viewBox="0 0 21.6 20.7"><path d="M10.200 3.900L16.700 7.300 5.100 12.500 13.800 16.400" fill="none" stroke="#f0f0f0" stroke-width="1"/><circle cx="10.2" cy="3.9" r="1.1" fill="#f0f0f0"/><circle cx="16.7" cy="7.3" r="1.1" fill="#f0f0f0"/><circle cx="13.8" cy="16.4" r="1.1" fill="#f0f0f0"/></svg>
<svg style="left:795.87px;top:70.3px" width="21.6" height="20.7" viewBox="0 0 21.6 20.7"><circle cx="11.1" cy="10.6" r="1.3" fill="#f0f0f0"/></svg>
<div style="left:828.5px;top:70.3px;width:20.2px;height:20.7px;background:#484a4d;border-radius:2.5px;"></div>
<svg style="left:828.5px;top:70.3px" width="20.2" height="20.7" viewBox="0 0 20.2 20.7"><path d="M1.800 7.200l9.800-2.600M5.200 6l-0.300-1.500 3-0.800 0.400 1.400" fill="none" stroke="#f0f0f0" stroke-width="1.200"/><path d="M2.700 8.300h8.600l-0.800 8.600h-7z" fill="none" stroke="#f0f0f0" stroke-width="1.200"/><path d="M5.200 9.500v6.300M7 9.500v6.300M8.800 9.500v6.300" stroke="#f0f0f0" stroke-width="1"/><text x="8.600" y="18.300" font-size="4.600" font-weight="700" fill="#f0f0f0" font-family="Liberation Sans, sans-serif">ALL</text></svg>
<div style="left:498.7px;top:104.5px;width:48.8px;height:21.7px;background:#484a4d;border-radius:3px;"></div>
<svg style="left:498.7px;top:104.5px" width="48.8" height="21.7" viewBox="0 0 48.8 21.7"><rect x="6.0" y="3.700" width="36.8" height="14.600" fill="none" stroke="#f0f0f0" stroke-width="1.200" /></svg>
<span style="top:109.4px;font-size:9px;line-height:13px;color:#f2f2f2;font-weight:700;left:514.3px;transform-origin:0 50%;transform:scaleX(0.944);">Live</span>
<div style="left:553px;top:104.5px;width:48.7px;height:21.7px;background:#484a4d;border-radius:3px;"></div>
<svg style="left:553px;top:104.5px" width="48.7" height="21.7" viewBox="0 0 48.7 21.7"><rect x="6" y="3.700" width="36.7" height="14.600" fill="none" stroke="#f0f0f0" stroke-width="1.200" stroke-dasharray="1.500 1.100"/></svg>
<span style="top:109.4px;font-size:9px;line-height:13px;color:#f2f2f2;font-weight:700;left:563.3px;transform-origin:0 50%;transform:scaleX(0.99);">Live×2</span>
<div style="left:607.5px;top:104.5px;width:48.2px;height:21.7px;background:#484a4d;border-radius:3px;"></div>
<svg style="left:607.5px;top:104.5px" width="48.2" height="21.7" viewBox="0 0 48.2 21.7"><rect x="6.0" y="3.700" width="36.2" height="14.600" fill="none" stroke="#f0f0f0" stroke-width="1.200" stroke-dasharray="4.200 2.600"/></svg>
<span style="top:109.4px;font-size:9px;line-height:13px;color:#f2f2f2;font-weight:700;left:617.8px;transform-origin:0 50%;transform:scaleX(0.99);">Live×4</span>
<div style="left:661.6px;top:108.2px;width:19.1px;height:14.4px;background:#484a4d;border-radius:2.5px;"></div>
<svg style="left:661.6px;top:108.2px" width="19.1" height="14.4" viewBox="0 0 19.1 14.4"><rect x="6.800" y="4.400" width="5.700" height="5.700" fill="none" stroke="#f0f0f0" stroke-width="1.100"/><path d="M4.300 4.700V2.300h2.600M15 4.700V2.300h-2.600M4.300 9.700v2.400h2.600M15 9.700v2.400h-2.600" fill="none" stroke="#f0f0f0" stroke-width="1"/></svg>
<div style="left:686.8px;top:108.2px;width:18.9px;height:14.4px;background:#484a4d;border-radius:2.5px;"></div>
<span style="top:109.05px;font-size:9.5px;line-height:13.5px;color:#f2f2f2;font-weight:700;left:691.3px;transform-origin:0 50%;transform:scaleX(0.728);">1:1</span>
<div style="left:710.6px;top:108.2px;width:37.4px;height:14.4px;background:#484a4d;border-radius:2.5px;"></div>
<div style="left:735.4px;top:108.2px;width:1.0px;height:14.4px;background:#3e4044;"></div>
<span style="top:108.55px;font-size:10.5px;line-height:14.5px;color:#e4e4e4;left:720.8px;transform-origin:0 50%;transform:scaleX(0.856);">41</span>
<svg style="left:736px;top:108.2px" width="12" height="14.4" viewBox="0 0 12 14.4"><path d="M2.300 4.500h7.400l-3.700 6z" fill="#f0f0f0"/></svg>
<span style="top:108.55px;font-size:10.5px;line-height:14.5px;color:#e4e4e4;left:751.8px;transform-origin:0 50%;transform:scaleX(0.856);">%</span>
<div style="left:764.3px;top:108.2px;width:13.9px;height:14.4px;background:#484a4d;border-radius:2.5px;"></div>
<svg style="left:764.3px;top:108.2px" width="13.9" height="14.4" viewBox="0 0 13.9 14.4"><circle cx="6" cy="6.200" r="3.900" fill="none" stroke="#f0f0f0" stroke-width="1.200"/><path d="M8.800 9l3.500 3.500" stroke="#f0f0f0" stroke-width="1.600"/><path d="M4 6.200h4M6 4.200v4" stroke="#f0f0f0" stroke-width="1"/></svg>
<div style="left:783.8px;top:104.8px;width:20.9px;height:21.2px;background:#484a4d;border-radius:2.5px;"></div>
<svg style="left:783.8px;top:104.8px" width="20.9" height="21.2" viewBox="0 0 20.9 21.2"><rect x="3.700" y="4" width="13.300" height="13" rx="1" fill="none" stroke="#f0f0f0" stroke-width="1.400"/><path d="M6.300 11.400h4.500M6.300 13.900h4.500" stroke="#f0f0f0" stroke-width="1.300"/></svg>
<span style="top:108.55px;font-size:10.5px;line-height:14.5px;color:#e4e4e4;left:816.8px;transform-origin:0 50%;transform:scaleX(0.827);">Range:</span>
<div style="left:850.2px;top:104.6px;width:63.5px;height:21.6px;background:#484a4d;border-radius:3px;"></div>
<div style="left:871.3px;top:104.6px;width:21.0px;height:21.6px;background:#2e66b0;"></div>
<div style="left:870.8px;top:104.6px;width:0.6px;height:21.6px;background:#3a3c40;"></div>
<div style="left:892.3px;top:104.6px;width:0.6px;height:21.6px;background:#3a3c40;"></div>
<svg style="left:850.2px;top:104.6px" width="63.5" height="21.6" viewBox="0 0 63.5 21.6"><path d="M6.400 15.200h7.100" stroke="#f0f0f0" stroke-width="2"/><path d="M27.700 11.100h7.800M27.700 13.450h7.800M27.700 15.800h7.800" stroke="#f0f0f0" stroke-width="1.600"/><path d="M49.600 5.500h7.800M49.600 8.100h7.800M49.600 10.700h7.800M49.600 13.300h7.800M49.600 15.900h7.800" stroke="#f0f0f0" stroke-width="1.700"/></svg>
<div style="left:915.2px;top:104.6px;width:20.8px;height:21.6px;background:#484a4d;border-radius:3px;"></div>
<span style="top:105.75px;font-size:6.5px;line-height:10.5px;color:#f2f2f2;font-weight:700;left:917.8px;transform-origin:0 50%;transform:scaleX(0.885);">AUTO</span>
<svg style="left:915.2px;top:104.6px" width="20.8" height="21.6" viewBox="0 0 20.8 21.6"><circle cx="10.200" cy="13.900" r="3.700" fill="#f0f0f0"/><path d="M10.500 11.200a2.700 2.700 0 0 1 0 5.400z" fill="#333"/></svg>
<div style="left:941.4px;top:104.6px;width:21.0px;height:21.6px;background:#484a4d;border-radius:3px;"></div>
<span style="top:110.1px;font-size:8px;line-height:12px;color:#f6f6f6;font-weight:700;left:943.1px;transform-origin:0 50%;transform:scaleX(0.851);">Hi-Lo</span>
<div style="left:967.8px;top:104.6px;width:42.2px;height:21.6px;background:#484a4d;border-radius:3px;"></div>
<div style="left:988.7px;top:104.6px;width:0.6px;height:21.6px;background:#3a3c40;"></div>
<svg style="left:967.8px;top:104.6px" width="42.2" height="21.6" viewBox="0 0 42.2 21.6"><path d="M16.500 8.200V4.600H3.500v12.600h7" fill="none" stroke="#f0f0f0" stroke-width="1.500"/><path d="M19.600 9.600H7.500M10 6.800L6.800 9.600 10 12.400" fill="none" stroke="#f0f0f0" stroke-width="1.400"/><circle cx="14.900" cy="15.200" r="3.500" fill="#f0f0f0"/><path d="M15.100 12.600a2.600 2.600 0 0 1 0 5.200z" fill="#333"/><path d="M29 8.900h7a3 3 0 0 1 3 3v1.700a3 3 0 0 1-3 3h-9" fill="none" stroke="#f0f0f0" stroke-width="1.500"/><path d="M31.800 6.200L28.600 8.900 31.800 11.600" fill="none" stroke="#f0f0f0" stroke-width="1.400"/><circle cx="25.500" cy="7.400" r="1" fill="#f0f0f0"/></svg>
<div style="left:1015.5px;top:104.6px;width:65.5px;height:21.6px;background:#484a4d;border-radius:3px;"></div>
<div style="left:1015.5px;top:104.6px;width:32.1px;height:21.6px;background:#2e66b0;border-radius:3px;border-radius:3px 0 0 3px;"></div>
<span style="top:109.75px;font-size:9.5px;line-height:13.5px;color:#f2f2f2;font-weight:700;font-family:'Liberation Mono',monospace;left:1023.8px;transform-origin:0 50%;transform:scaleX(0.7);">Int.</span>
<span style="top:109.75px;font-size:9.5px;line-height:13.5px;color:#f2f2f2;font-weight:700;font-family:'Liberation Mono',monospace;left:1050.8px;transform-origin:0 50%;transform:scaleX(0.833);">Photon</span>
<div style="left:492.5px;top:149px;width:640.5px;height:1px;background:#3a3a3a;"></div>
<div style="left:489.8px;top:132.5px;width:32.0px;height:17.5px;background:#1c1c1c;border:1px solid #3a3a3a;border-bottom:none;border-top:none;box-sizing:border-box;"></div>
<span style="top:132.85px;font-size:10.5px;line-height:14.5px;color:#e4e4e4;left:497.8px;transform-origin:0 50%;transform:scaleX(0.907);">Tile</span>
<div style="left:496px;top:152.8px;width:39px;height:15.2px;background:#192c49;border-radius:2px;"></div>
<span style="top:153.25px;font-size:10.5px;line-height:14.5px;color:#2e4c75;left:499.8px;transform-origin:0 50%;transform:scaleX(0.889);">CH1 A</span>
<div style="left:1133px;top:146.3px;width:67px;height:1.0px;background:#4a4a4a;"></div>
<div style="left:489.5px;top:150px;width:1.0px;height:341px;background:#333;"></div>
<div style="left:489.5px;top:490.8px;width:672.5px;height:1.0px;background:#333;"></div>
<div style="left:1133px;top:492px;width:67px;height:1px;background:#3a3a3a;"></div>
<span style="top:492.55px;font-size:10.5px;line-height:14.5px;color:#e4e4e4;left:489.4px;transform-origin:0 50%;transform:scaleX(0.876);">Size:512x</span>
<div style="left:1169px;top:193.3px;width:21.3px;height:20.2px;background:#484a4d;border-radius:3px;"></div>
<span style="top:198.25px;font-size:6.5px;line-height:10.5px;color:#f2f2f2;font-weight:700;left:1171.8px;transform-origin:0 50%;transform:scaleX(0.958);">CH</span>
<span style="top:192.75px;font-size:14.5px;line-height:18.5px;color:#f6f6f6;left:1183.4px;transform-origin:0 50%;transform:scaleX(0.7);">1</span>
<svg style="left:1183px;top:208.3px" width="8" height="4" viewBox="0 0 8 4"><path d="M1.300 0.500h5l-2.500 2.800z" fill="#f0f0f0"/></svg>
<div style="left:1169.3px;top:220px;width:20.9px;height:18.5px;background:#484a4d;border-radius:3px;"></div>
<span style="top:219.1px;font-size:6.2px;line-height:10.2px;color:#f2f2f2;font-weight:700;left:1171.3px;transform-origin:0 50%;transform:scaleX(0.97);">AUTO</span>
<svg style="left:1169.3px;top:220px" width="21" height="18.5" viewBox="0 0 21 18.5"><circle cx="10.500" cy="11.700" r="3.300" fill="#f0f0f0"/><path d="M10.500 9.300a2.400 2.400 0 0 0 0 4.800z" fill="#333"/></svg>
<div style="left:1169.4px;top:245.2px;width:20.9px;height:18.4px;background:#2e66b0;border-radius:2.5px;"></div>
<span style="top:246.3px;font-size:11px;line-height:15px;color:#f2f2f2;font-weight:700;left:1171.3px;transform-origin:0 50%;transform:scaleX(1.0);">log</span>
<div style="left:1160.5px;top:268.5px;width:37.0px;height:14.5px;background:#4f5155;border-radius:3px;"></div>
<span style="top:268.95px;font-size:10.5px;line-height:14.5px;color:#e4e4e4;left:1172.8px;transform-origin:0 50%;transform:scaleX(0.899);">4105</span>
<span style="top:284.95px;font-size:10.5px;line-height:14.5px;color:#e4e4e4;left:1171.3px;transform-origin:0 50%;transform:scaleX(0.994);">Int.</span>
<div style="left:1169.4px;top:306.8px;width:14.6px;height:123.7px;background:#000;background:linear-gradient(to bottom,#05f005 0,#05ee05 24%,#06a806 33%,#024a02 45%,#000 56%,#000 100%);"></div>
<div style="left:1165.3px;top:307.1px;width:1.8px;height:1.8px;background:#555;border-radius:1px;"></div>
<div style="left:1165.3px;top:312.4px;width:1.8px;height:1.8px;background:#555;border-radius:1px;"></div>
<div style="left:1165.3px;top:319.1px;width:1.8px;height:1.8px;background:#555;border-radius:1px;"></div>
<div style="left:1165.3px;top:429.1px;width:1.8px;height:1.8px;background:#555;border-radius:1px;"></div>
<svg style="left:1184px;top:333px" width="11" height="11" viewBox="0 0 11 11"><path d="M0.300 5.500L4 1.200h6.200v8.600H4z" fill="#c4c4c4"/></svg>
<svg style="left:1184px;top:424.5px" width="11" height="11" viewBox="0 0 11 11"><path d="M0.300 5.500L4 1.200h6.200v8.600H4z" fill="#7a7a7a"/></svg>
<div style="left:1161px;top:439px;width:36.5px;height:14.2px;background:#4f5155;border-radius:3px;"></div>
<span style="top:439.45px;font-size:10.5px;line-height:14.5px;color:#e4e4e4;left:1187.3px;transform-origin:0 50%;transform:scaleX(1.027);">0</span>
<span style="top:455.55px;font-size:10.5px;line-height:14.5px;color:#e4e4e4;left:1171.3px;transform-origin:0 50%;transform:scaleX(0.994);">Int.</span>
<div style="left:486.8px;top:514.3px;width:713.2px;height:1.0px;background:#3b3b3b;"></div>
<div style="left:486.8px;top:514.3px;width:1.0px;height:74.7px;background:#3b3b3b;"></div>
<div style="left:487.5px;top:530px;width:712.5px;height:1px;background:#3b3b3b;"></div>
<div style="left:488px;top:515.5px;width:75.5px;height:15.5px;background:#1c1c1c;border:1px solid #444;border-bottom:none;box-sizing:border-box;"></div>
<svg style="left:489.5px;top:518px" width="10" height="10" viewBox="0 0 10 10"><path d="M1 0.500v7.500h8" fill="none" stroke="#bdbdbd" stroke-width="1"/><path d="M2.500 5l2-2.500 1.500 1.500 1.500-2" fill="none" stroke="#bdbdbd" stroke-width="0.900"/><circle cx="7.500" cy="8" r="1.300" fill="none" stroke="#bdbdbd" stroke-width="0.800"/></svg>
<span style="top:516.15px;font-size:10.5px;line-height:14.5px;color:#f0f0f0;left:502.5px;transform-origin:0 50%;transform:scaleX(0.862);">Live Graph</span>
<svg style="left:551.5px;top:519.5px" width="8" height="8" viewBox="0 0 8 8"><path d="M1 1l6 6M7 1l-6 6" stroke="#f0f0f0" stroke-width="1.700"/></svg>
<div style="left:1174px;top:519.8px;width:6.3px;height:2.1px;background:#f4f4f4;"></div>
<div style="left:1188.8px;top:519.8px;width:6.2px;height:6.2px;background:#f4f4f4;"></div>
<div style="left:491px;top:550px;width:1px;height:39px;background:#3a3a3a;"></div>
<div style="left:491px;top:550px;width:210.5px;height:1px;background:#3a3a3a;"></div>
<div style="left:701px;top:535px;width:1px;height:54px;background:#3a3a3a;"></div>
<div style="left:525px;top:535px;width:176.5px;height:1px;background:#333;"></div>
<div style="left:491.5px;top:535px;width:34.0px;height:16px;background:#1c1c1c;border:1px solid #444;border-bottom:none;box-sizing:border-box;"></div>
<span style="top:536.15px;font-size:10.5px;line-height:14.5px;color:#e4e4e4;left:499.5px;transform-origin:0 50%;transform:scaleX(0.871);">Line</span>
<div style="left:496.4px;top:554.3px;width:200.6px;height:17.4px;background:#3b3c3f;border-radius:2px;"></div>
<div style="left:585.7px;top:554.3px;width:1.0px;height:17.4px;background:#2e3033;"></div>
<div style="left:624.7px;top:554.3px;width:1.0px;height:17.4px;background:#2e3033;"></div>
<div style="left:674.8px;top:554.3px;width:1.0px;height:17.4px;background:#2e3033;"></div>
<span style="top:556.35px;font-size:10.5px;line-height:14.5px;color:#c9c9c9;left:527.8px;transform-origin:0 50%;transform:scaleX(0.91);">Name</span>
<span style="top:556.35px;font-size:10.5px;line-height:14.5px;color:#c9c9c9;left:592.8px;transform-origin:0 50%;transform:scaleX(0.917);">Color</span>
<span style="top:556.35px;font-size:10.5px;line-height:14.5px;color:#c9c9c9;left:640.8px;transform-origin:0 50%;transform:scaleX(0.881);">Line</span>
<span style="top:556.35px;font-size:10.5px;line-height:14.5px;color:#c9c9c9;left:681.3px;transform-origin:0 50%;transform:scaleX(0.886);">Wic</span>
<div style="left:697px;top:554px;width:4px;height:18px;background:#1c1c1c;"></div>
<div style="left:492px;top:572.5px;width:208.5px;height:16.5px;background:#171717;"></div>
<div style="left:705.5px;top:535.6px;width:347.5px;height:53.4px;background:#000;"></div>
<svg style="left:705.5px;top:535.6px" width="347.5" height="53.4" viewBox="0 0 347.5 53.4"><path d="M49 53.400V12h288.500v41.400" fill="none" stroke="#d6d6d6" stroke-width="1"/></svg>
<span style="top:538.05px;font-size:7.5px;line-height:11.5px;color:#e0e0e0;left:747.3px;transform-origin:0 50%;transform:scaleX(0.839);">1</span>
<div style="left:1053px;top:535.6px;width:1px;height:53.4px;background:#333;"></div>
<div style="left:1064.4px;top:546px;width:1.0px;height:43px;background:#3c3c3c;"></div>
<div style="left:1064.4px;top:546px;width:6.6px;height:1px;background:#3c3c3c;"></div>
<div style="left:1139.5px;top:546px;width:38.5px;height:1px;background:#3c3c3c;"></div>
<span style="top:539.15px;font-size:10.5px;line-height:14.5px;color:#e4e4e4;left:1073.1px;transform-origin:0 50%;transform:scaleX(0.932);">Horizontal Axis</span>
<div style="left:1072px;top:556.4px;width:12px;height:11.6px;background:#4b4d51;border-radius:2px;"></div>
<svg style="left:1072px;top:556.4px" width="12" height="11.6" viewBox="0 0 12 11.6"><path d="M2.500 6l2.500 2.800 4.700-6" fill="none" stroke="#f2f2f2" stroke-width="1.700"/></svg>
<span style="top:555.75px;font-size:10.5px;line-height:14.5px;color:#e4e4e4;left:1088.8px;transform-origin:0 50%;transform:scaleX(0.949);">Auto</span>
<span style="top:575.95px;font-size:10.5px;line-height:14.5px;color:#e4e4e4;left:1071.8px;transform-origin:0 50%;transform:scaleX(0.894);">Time Range</span>
<div style="left:1129px;top:575px;width:51px;height:17px;background:#2a2a2a;border-radius:3px;"></div>
<span style="top:576.15px;font-size:10.5px;line-height:14.5px;color:#4e4e4e;left:1136.8px;transform-origin:0 50%;transform:scaleX(0.866);">000:00:10.</span>
<div style="left:1181.3px;top:538.7px;width:13.5px;height:12.7px;background:#484a4d;border-radius:2.5px;"></div>
<svg style="left:1181.3px;top:538.7px" width="13.5" height="12.7" viewBox="0 0 13.5 12.7"><path d="M6.750 3.500l4 5.500h-8z" fill="#f2f2f2"/></svg>
<div style="left:1182px;top:554.3px;width:12.2px;height:32.7px;background:#4b4d51;border-radius:3px;"></div>
<svg style="left:1182px;top:554.3px" width="12.2" height="32.7" viewBox="0 0 12.2 32.7"><path d="M3 14.800h6.200M3 16.800h6.200M3 18.800h6.200" stroke="#3a3a3a" stroke-width="0.800"/></svg>
<div style="left:528px;top:133.7px;width:604.5px;height:378.3px;background:#fff;border-radius:5px;box-shadow:0 0 6px rgba(0,0,0,0.55);overflow:hidden;"></div>
<div style="left:528px;top:133.7px;width:604.5px;height:19.3px;background:#f3f3f3;border-radius:5px 5px 0 0;"></div>
<div style="left:528px;top:153px;width:604.5px;height:54.5px;background:#f9f9f9;"></div>
<div style="left:528px;top:187px;width:604.5px;height:20.5px;background:#f5f6f8;"></div>
<div style="left:528px;top:207px;width:604.5px;height:1px;background:#efefef;"></div>
<div style="left:528px;top:464px;width:604.5px;height:48px;background:#f0f0f0;border-radius:0 0 5px 5px;"></div>
<div style="left:533px;top:137.5px;width:10.8px;height:10.5px;background:#101c36;"></div>
<span style="top:137.3px;font-size:6px;line-height:10px;color:#fff;font-weight:700;left:535.8px;transform-origin:0 50%;transform:scaleX(0.938);">FV</span>
<svg style="left:533.5px;top:139.5px" width="3" height="5" viewBox="0 0 3 5"><path d="M0.300 1h2.200M0.300 2.500h2.200M0.300 4h2.200" stroke="#fff" stroke-width="0.600"/></svg>
<span style="top:137.15px;font-size:8.5px;line-height:12.5px;color:#1b1b1b;left:547.3px;transform-origin:0 50%;transform:scaleX(0.875);">Open</span>
<svg style="left:1118px;top:138.5px" width="9" height="9" viewBox="0 0 9 9"><path d="M1 1l7 7M8 1l-7 7" stroke="#333" stroke-width="1"/></svg>
<svg style="left:536px;top:165.5px" width="10" height="10" viewBox="0 0 10 10"><path d="M9 5H1.500M4.800 1.600L1.400 5l3.400 3.400" fill="none" stroke="#b4b4b4" stroke-width="0.900"/></svg>
<svg style="left:558.7px;top:165.5px" width="10" height="10" viewBox="0 0 10 10"><path d="M1 5h7.500M5.200 1.600L8.600 5 5.200 8.400" fill="none" stroke="#b4b4b4" stroke-width="0.900"/></svg>
<svg style="left:579.5px;top:167px" width="8" height="8" viewBox="0 0 8 8"><path d="M1.300 2.500L4 5.300 6.700 2.500" fill="none" stroke="#b4b4b4" stroke-width="0.900"/></svg>
<svg style="left:596.7px;top:165.5px" width="10" height="10" viewBox="0 0 10 10"><path d="M5 9.200V1.500M1.700 4.600L5 1.300l3.300 3.300" fill="none" stroke="#7a7a7a" stroke-width="0.900"/></svg>
<div style="left:616px;top:160px;width:371.5px;height:20.5px;background:#fff;border-radius:2px;box-shadow:inset 0 0 0 1px #e9e9e9;"></div>
<svg style="left:621px;top:165.5px" width="11.5" height="9" viewBox="0 0 11.5 9"><rect x="0.200" y="0.600" width="10.800" height="7.400" rx="0.800" fill="#2ba3dc"/><rect x="0.200" y="0.600" width="10.800" height="3" rx="0.800" fill="#55c3ee"/></svg>
<svg style="left:636.5px;top:167px" width="5" height="7" viewBox="0 0 5 7"><path d="M1.400 1.600l2 2L1.400 5.600" fill="none" stroke="#555" stroke-width="0.800"/></svg>
<span style="top:164.5px;font-size:8px;line-height:12px;color:#1b1b1b;left:647.3px;transform-origin:0 50%;transform:scaleX(0.937);">Desktop</span>
<svg style="left:681.7px;top:167px" width="5" height="7" viewBox="0 0 5 7"><path d="M1.400 1.600l2 2L1.400 5.600" fill="none" stroke="#555" stroke-width="0.800"/></svg>
<svg style="left:947.5px;top:167.5px" width="8" height="6" viewBox="0 0 8 6"><path d="M1 1.200l2.800 2.800L6.600 1.200" fill="none" stroke="#9a9a9a" stroke-width="0.900"/></svg>
<svg style="left:969.5px;top:165.5px" width="10" height="10" viewBox="0 0 10 10"><path d="M8.300 5a3.400 3.400 0 1 1-1.200-2.600" fill="none" stroke="#8a8a8a" stroke-width="0.900"/><path d="M7.300 0.800v2h-2" fill="none" stroke="#8a8a8a" stroke-width="0.900"/></svg>
<div style="left:995.5px;top:160px;width:129.0px;height:20.5px;background:#fff;border-radius:2px;box-shadow:inset 0 0 0 1px #e9e9e9;"></div>
<span style="top:164.5px;font-size:8px;line-height:12px;color:#7b7b7b;left:1000.5px;transform-origin:0 50%;transform:scaleX(0.91);">Search Desktop</span>
<svg style="left:1110.5px;top:166px" width="9" height="9" viewBox="0 0 9 9"><circle cx="5.300" cy="3.600" r="2.300" fill="none" stroke="#666" stroke-width="0.900"/><path d="M3.700 5.300L1.300 7.800" stroke="#666" stroke-width="1"/></svg>
<span style="top:192.4px;font-size:8px;line-height:12px;color:#3d5273;left:539.3px;transform-origin:0 50%;transform:scaleX(0.939);">Organize</span>
<svg style="left:573px;top:196.3px" width="6" height="4" viewBox="0 0 6 4"><path d="M0.700 0.600h4.600L3 3.400z" fill="#333"/></svg>
<span style="top:192.4px;font-size:8px;line-height:12px;color:#3d5273;left:597.8px;transform-origin:0 50%;transform:scaleX(0.967);">New folder</span>
<svg style="left:1055.5px;top:194px" width="8" height="9" viewBox="0 0 8 9"><rect x="0.5" y="0.5" width="2.600" height="1.800" fill="#8a8a8a"/><rect x="0.5" y="3.2" width="2.600" height="1.800" fill="#8a8a8a"/><rect x="0.5" y="5.9" width="2.600" height="1.800" fill="#8a8a8a"/><rect x="4.2" y="0.5" width="2.600" height="1.800" fill="#8a8a8a"/><rect x="4.2" y="3.2" width="2.600" height="1.800" fill="#8a8a8a"/><rect x="4.2" y="5.9" width="2.600" height="1.800" fill="#8a8a8a"/></svg>
<svg style="left:1070px;top:196.3px" width="6" height="4" viewBox="0 0 6 4"><path d="M0.500 0.600h5L3 3.500z" fill="#333"/></svg>
<svg style="left:1089.5px;top:194px" width="10" height="8" viewBox="0 0 10 8"><rect x="0.500" y="0.500" width="9" height="6.600" fill="#fff" stroke="#444" stroke-width="0.900"/><rect x="5.300" y="0.900" width="3.800" height="5.800" fill="#2b7cd3"/></svg>
<svg style="left:1112px;top:192.5px" width="11" height="11" viewBox="0 0 11 11"><circle cx="5.500" cy="5.500" r="5" fill="#1b8ad6"/><rect x="4.900" y="4.600" width="1.300" height="3.700" fill="#fff"/><circle cx="5.550" cy="3.100" r="0.800" fill="#fff"/></svg>
<svg style="left:557.5px;top:213.5px" width="10.5" height="9.5" viewBox="0 0 10.5 9.5"><path d="M0.300 1.300a0.700 0.700 0 0 1 0.700-0.700h2.800l1.200 1.200h4.500a0.700 0.700 0 0 1 0.700 0.700v5.800a0.700 0.700 0 0 1-0.700 0.700h-8.500a0.700 0.700 0 0 1-0.700-0.700z" fill="#f0c64f"/><path d="M0.300 3.300h9.900v5a0.700 0.700 0 0 1-0.700 0.700h-8.500a0.700 0.700 0 0 1-0.700-0.700z" fill="#f8d975"/></svg>
<span style="top:213.0px;font-size:8px;line-height:12px;color:#1b1b1b;left:568.8px;transform-origin:0 50%;transform:scaleX(0.942);">example</span>
<span style="top:470.95px;font-size:8.5px;line-height:12.5px;color:#111;left:610.8px;transform-origin:0 50%;transform:scaleX(0.874);">File name:</span>
<div style="left:649px;top:469.7px;width:344px;height:14.8px;background:#fff;border-radius:2px;box-shadow:inset 0 0 0 1px #6daed6;"></div>
<div style="left:652.5px;top:472.5px;width:0.6px;height:9.5px;background:#555;"></div>
<svg style="left:983.5px;top:475px" width="7" height="5" viewBox="0 0 7 5"><path d="M0.800 1l2.700 2.600L6.200 1" fill="none" stroke="#666" stroke-width="0.800"/></svg>
<div style="left:1000.7px;top:469.7px;width:119.3px;height:14.8px;background:#fbfbfb;border-radius:2px;box-shadow:inset 0 0 0 1px #e3e3e3;"></div>
<span style="top:471.5px;font-size:8px;line-height:12px;color:#1b1b1b;left:1003.5px;transform-origin:0 50%;transform:scaleX(0.944);">Olympus Image Format Raw (*.</span>
<svg style="left:1112.3px;top:475px" width="7" height="5" viewBox="0 0 7 5"><path d="M0.800 1l2.700 2.600L6.200 1" fill="none" stroke="#666" stroke-width="0.800"/></svg>
<div style="left:1001px;top:488.6px;width:56px;height:14.8px;background:#fdfdfd;border-radius:2.5px;box-shadow:inset 0 0 0 1px #74b2da;"></div>
<span style="top:490.2px;font-size:8px;line-height:12px;color:#1b1b1b;left:1020.3px;transform-origin:0 50%;transform:scaleX(0.894);">Open</span>
<div style="left:1065.7px;top:488.6px;width:54.3px;height:14.8px;background:#fdfdfd;border-radius:2.5px;box-shadow:inset 0 0 0 1px #e2e2e2;"></div>
<span style="top:490.2px;font-size:8px;line-height:12px;color:#1b1b1b;left:1081.3px;transform-origin:0 50%;transform:scaleX(0.923);">Cancel</span>
<svg style="left:1124px;top:503.5px" width="7" height="7" viewBox="0 0 7 7"><path d="M6 2L2 6M6 4.500L4.500 6" stroke="#cfcfcf" stroke-width="0.800"/></svg>
<svg style="left:212px;top:36.3px" width="14" height="20" viewBox="0 0 14 20"><path d="M1.500 1.500v14l3.300-3 2.300 5.300 2.600-1.100-2.300-5.200h4.500z" fill="#fff" stroke="#222" stroke-width="1"/></svg>
</div></body></html>
